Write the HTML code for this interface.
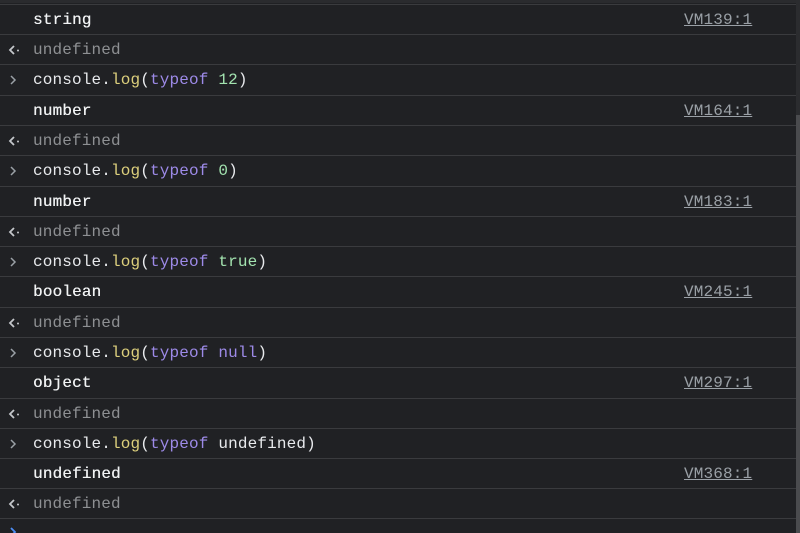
<!DOCTYPE html>
<html><head><style>
html,body{margin:0;width:800px;height:533px;overflow:hidden;}
body{background:#202124;position:relative;font-family:"Liberation Mono",monospace;font-size:16px;letter-spacing:0.15px;}
.top{position:absolute;left:0;top:0;width:800px;height:3px;background:#2a2b2e;}
.r{position:absolute;left:0;width:796px;height:30px;border-top:1px solid #3a3b3e;line-height:30px;}
.t{position:absolute;left:33px;top:0;white-space:pre;}
.o{color:#f1f3f4;text-shadow:0.3px 0 0 #f1f3f4;}
.u{color:#8e9093;}
.c{color:#e8eaed;}
.y{color:#dccf7c;}
.p{color:#9d8ae8;}
.g{color:#a3e4b0;}
.l{position:absolute;left:684px;top:0;color:#9aa0a6;text-decoration:underline;}
svg{position:absolute;left:0;top:0;}
.sb{position:absolute;left:796px;top:0;width:4px;height:533px;background:#2b2c2f;}
.th{position:absolute;left:796px;top:115px;width:4px;height:418px;background:#4a4b4e;}
</style></head><body>
<div class="top"></div>
<div class="r" style="top:4px"><span class="t o">string</span><span class="l">VM139:1</span></div>
<div class="r" style="top:34px"><svg width="30" height="30"><path d="M14 11 L10 15 L14 19" stroke="#c4c7cb" stroke-width="1.8" fill="none"/><circle cx="18" cy="15.5" r="1" fill="#c4c7cb"/></svg><span class="t u">undefined</span></div>
<div class="r" style="top:64px"><svg width="30" height="30"><path d="M11 11 L15 15 L11 19" stroke="#9aa0a6" stroke-width="1.5" fill="none"/></svg><span class="t c">console.<span class="y">log</span>(<span class="p">typeof</span> <span class="g">12</span>)</span></div>
<div class="r" style="top:95px"><span class="t o">number</span><span class="l">VM164:1</span></div>
<div class="r" style="top:125px"><svg width="30" height="30"><path d="M14 11 L10 15 L14 19" stroke="#c4c7cb" stroke-width="1.8" fill="none"/><circle cx="18" cy="15.5" r="1" fill="#c4c7cb"/></svg><span class="t u">undefined</span></div>
<div class="r" style="top:155px"><svg width="30" height="30"><path d="M11 11 L15 15 L11 19" stroke="#9aa0a6" stroke-width="1.5" fill="none"/></svg><span class="t c">console.<span class="y">log</span>(<span class="p">typeof</span> <span class="g">0</span>)</span></div>
<div class="r" style="top:186px"><span class="t o">number</span><span class="l">VM183:1</span></div>
<div class="r" style="top:216px"><svg width="30" height="30"><path d="M14 11 L10 15 L14 19" stroke="#c4c7cb" stroke-width="1.8" fill="none"/><circle cx="18" cy="15.5" r="1" fill="#c4c7cb"/></svg><span class="t u">undefined</span></div>
<div class="r" style="top:246px"><svg width="30" height="30"><path d="M11 11 L15 15 L11 19" stroke="#9aa0a6" stroke-width="1.5" fill="none"/></svg><span class="t c">console.<span class="y">log</span>(<span class="p">typeof</span> <span class="g">true</span>)</span></div>
<div class="r" style="top:276px"><span class="t o">boolean</span><span class="l">VM245:1</span></div>
<div class="r" style="top:307px"><svg width="30" height="30"><path d="M14 11 L10 15 L14 19" stroke="#c4c7cb" stroke-width="1.8" fill="none"/><circle cx="18" cy="15.5" r="1" fill="#c4c7cb"/></svg><span class="t u">undefined</span></div>
<div class="r" style="top:337px"><svg width="30" height="30"><path d="M11 11 L15 15 L11 19" stroke="#9aa0a6" stroke-width="1.5" fill="none"/></svg><span class="t c">console.<span class="y">log</span>(<span class="p">typeof</span> <span class="p">null</span>)</span></div>
<div class="r" style="top:367px"><span class="t o">object</span><span class="l">VM297:1</span></div>
<div class="r" style="top:398px"><svg width="30" height="30"><path d="M14 11 L10 15 L14 19" stroke="#c4c7cb" stroke-width="1.8" fill="none"/><circle cx="18" cy="15.5" r="1" fill="#c4c7cb"/></svg><span class="t u">undefined</span></div>
<div class="r" style="top:428px"><svg width="30" height="30"><path d="M11 11 L15 15 L11 19" stroke="#9aa0a6" stroke-width="1.5" fill="none"/></svg><span class="t c">console.<span class="y">log</span>(<span class="p">typeof</span> <span class="c">undefined</span>)</span></div>
<div class="r" style="top:458px"><span class="t o">undefined</span><span class="l">VM368:1</span></div>
<div class="r" style="top:488px"><svg width="30" height="30"><path d="M14 11 L10 15 L14 19" stroke="#c4c7cb" stroke-width="1.8" fill="none"/><circle cx="18" cy="15.5" r="1" fill="#c4c7cb"/></svg><span class="t u">undefined</span></div>
<div class="r" style="top:518px"><svg width="30" height="30"><path d="M11 9 L15 13 L11 17" stroke="#4c8df6" stroke-width="1.8" fill="none"/></svg></div>
<div class="sb"></div><div class="th"></div>
</body></html>
